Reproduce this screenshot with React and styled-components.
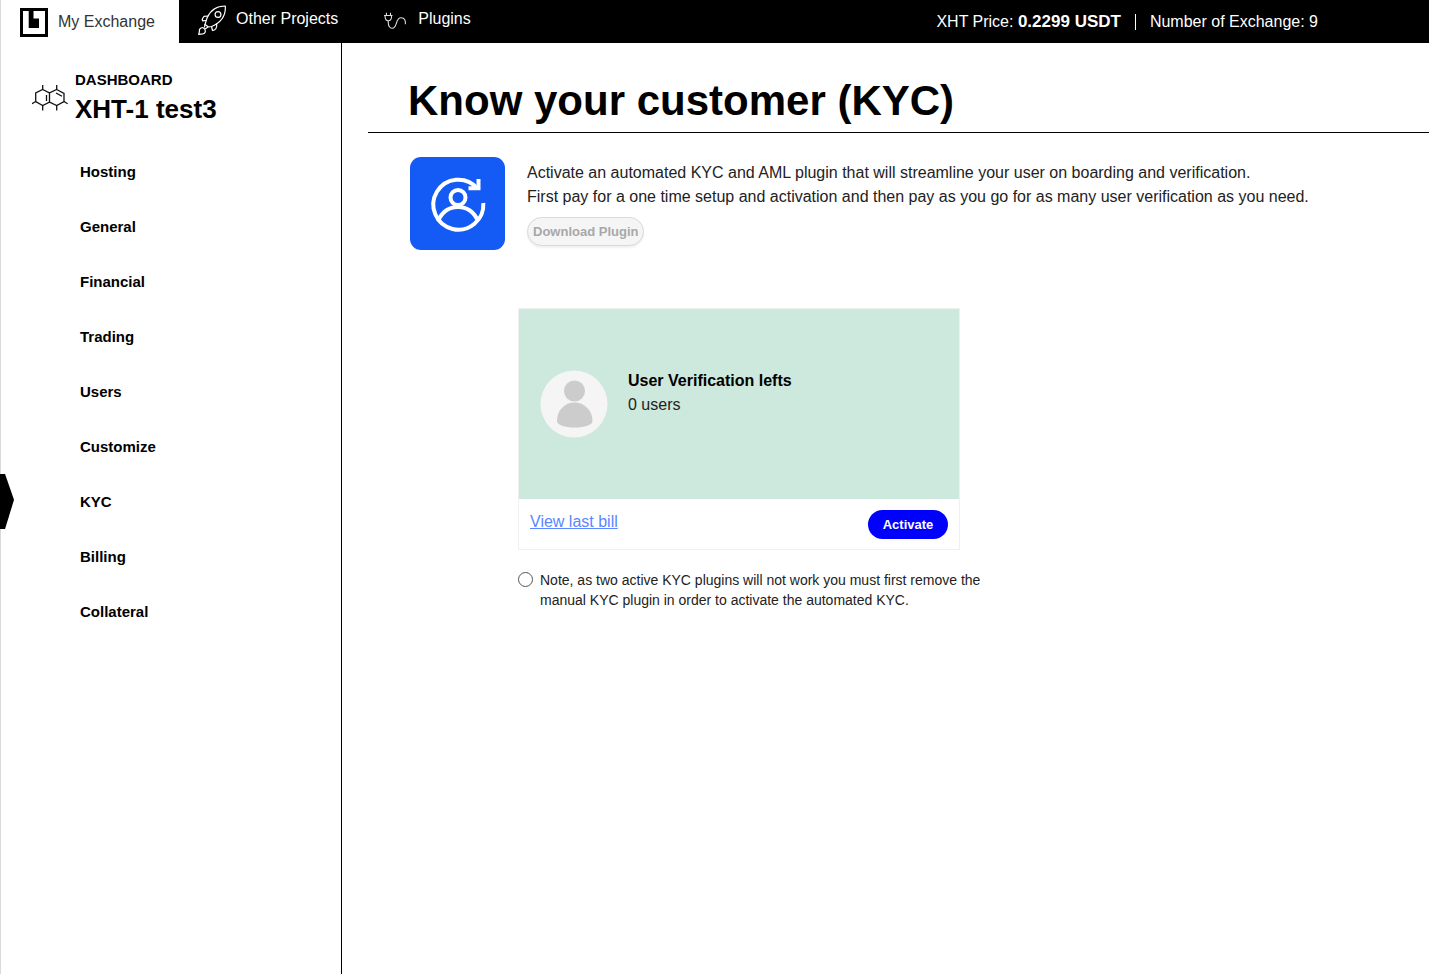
import React from "react";
import styled, { createGlobalStyle } from "styled-components";

const menu = [
  "Hosting",
  "General",
  "Financial",
  "Trading",
  "Users",
  "Customize",
  "KYC",
  "Billing",
  "Collateral",
];

function LogoIcon() {
  return (
    <svg width="28" height="31" viewBox="0 -2 28 31" aria-hidden="true">
      <path d="M1.5 1.5h25v26h-25z" fill="none" stroke="#000" strokeWidth="3" />
      <path d="M8.700 2h4.800v8.500h5.500V20H8.700z" fill="#000" />
    </svg>
  );
}

function RocketIcon() {
  return (
    <svg width="28" height="30" viewBox="0 0 28 30" fill="none" stroke="#fff" strokeWidth="1.2" strokeLinejoin="round" aria-hidden="true">
      <path d="M27.300 1C18 1 12 6 9 13l-2 6.500 3.500 2.500 3-.5C22 18 28 11 27.300 1z" />
      <circle cx="20" cy="9.500" r="2.900" />
      <path d="M10 11l-4 .3c-1 1-2 3-1.500 4.500L8 15.500M18.500 18.500c.5 2 .3 4-.5 5-1 1.500-2 2-3.500 2l-1-4M7 19l-.5 3.500M10 22l-3 2" />
      <path d="M4.700 22.500C2 23 1 24.500 1.500 26L.7 29.400l4-.5c2-.4 3-2 2.500-3.500-.3-1.500-1-2.400-2.500-2.900z" />
    </svg>
  );
}

function PlugIcon() {
  return (
    <svg width="22" height="18" viewBox="0 0 22 18" fill="none" stroke="#ddd" strokeWidth="1.1" aria-hidden="true">
      <path d="M0 4.500h8.500M2.400 1.800v2.700M6.500 1.800v2.700M1 4.500c0 3 .5 5.300 3.300 5.300S7.600 7.500 7.600 4.500" />
      <path d="M4.300 10c-.3 4 1 7.300 4 7.300 5.500 0 2.700-10.500 8.700-10.500 4 0 4.700 3 4.300 6.500" />
    </svg>
  );
}

function MoleculeIcon() {
  return (
    <svg width="36" height="26" viewBox="0 0 36 26" fill="none" stroke="#111" strokeWidth="1.3" aria-hidden="true">
      <path d="M10.700 4.500L17.500 8v9l-6.800 3.500-7-4V8zM24.700 4.500L32 8.500v8l-7.300 4L17.500 17V8z" />
      <path d="M10.700 4.500V0M24.700 4.500V0M10.700 20.500v5M24.700 20.500v5M3.700 16.500L0 18.800M32 16.500l3.700 2.300M14.500 10v6M24 8l6 3.300" />
    </svg>
  );
}

function KycIcon() {
  return (
    <svg width="95" height="93" viewBox="0 0 95 93" aria-hidden="true">
      <rect width="95" height="93" rx="11" fill="#145af5" />
      <g fill="none" stroke="#fff" strokeWidth="4">
        <path d="M67 31A25 25 0 1 0 73.300 46" />
        <path d="M68.500 22v9.300H58.500" />
        <circle cx="48" cy="40.500" r="7.500" />
        <path d="M28 64c4-9 11-14 20-14s16 5 20 14" />
      </g>
    </svg>
  );
}

function AvatarIcon() {
  return (
    <svg width="68" height="68" viewBox="0 0 68 68" aria-hidden="true">
      <circle cx="34" cy="34" r="33.500" fill="#f5f5f5" />
      <circle cx="34.500" cy="21" r="10.500" fill="#ccc" />
      <path d="M17 51c0-11 8-18.500 17.500-18.500S52.500 40 52.500 51c0 4-8 6.500-18 6.500S17 55 17 51z" fill="#ccc" />
    </svg>
  );
}

export default function App() {
  return (
    <Page>
      <GlobalStyle />
      <TopBar>
        <ExchangeTab href="#exchange">
          <LogoIcon />
          My Exchange
        </ExchangeTab>
        <TopLink href="#projects">
          <RocketIcon />
          <span>Other Projects</span>
        </TopLink>
        <TopLink href="#plugins">
          <PlugIcon />
          <span>Plugins</span>
        </TopLink>
        <Stats>
          <span>
            XHT Price: <Price>0.2299 USDT</Price>
          </span>
          <Divider />
          <span>Number of Exchange: 9</span>
        </Stats>
      </TopBar>

      <Body>
        <Sidebar>
          <Project>
            <MoleculeIcon />
            <div>
              <ProjectLabel>DASHBOARD</ProjectLabel>
              <ProjectName>XHT-1 test3</ProjectName>
            </div>
          </Project>
          <Menu>
            {menu.map((name) => (
              <li key={name}>
                <MenuLink href={"#" + name.toLowerCase()} $active={name === "KYC"}>
                  {name}
                </MenuLink>
              </li>
            ))}
          </Menu>
        </Sidebar>

        <Main>
          <Title>Know your customer (KYC)</Title>
          <Intro>
            <KycIcon />
            <IntroText>
              <Text>
                Activate an automated KYC and AML plugin that will streamline your user on boarding and verification.
              </Text>
              <Text>
                First pay for a one time setup and activation and then pay as you go for as many user verification as you need.
              </Text>
              <DownloadButton type="button" disabled>
                Download Plugin
              </DownloadButton>
            </IntroText>
          </Intro>

          <Plan>
            <Card>
              <CardTop>
                <AvatarIcon />
                <div>
                  <CardTitle>User Verification lefts</CardTitle>
                  <Text>0 users</Text>
                </div>
              </CardTop>
              <CardBottom>
                <BillLink href="#bill">View last bill</BillLink>
                <ActivateButton type="button">Activate</ActivateButton>
              </CardBottom>
            </Card>
            <Note>
              <Radio type="radio" name="note" />
              <span>
                Note, as two active KYC plugins will not work you must first remove the manual KYC plugin in order to
                activate the automated KYC.
              </span>
            </Note>
          </Plan>
        </Main>
      </Body>
    </Page>
  );
}

//Styled components

const GlobalStyle = createGlobalStyle`
  * {
    box-sizing: border-box;
  }
  body {
    margin: 0;
    background: #fff;
    color: #000;
    font-family: "Liberation Sans", Arial, sans-serif;
    font-size: 16px;
  }
  svg {
    flex: none;
  }
`;

const Page = styled.div`
  min-height: 100vh;
  display: flex;
  flex-direction: column;
`;

const TopBar = styled.header`
  display: flex;
  height: 43px;
  background: #000;
  color: #fff;
`;

const ExchangeTab = styled.a`
  display: flex;
  align-items: center;
  gap: 10px;
  width: 179px;
  padding-left: 19px;
  border-left: 1px solid #d9d9d9;
  background: #fff;
  color: #333;
  text-decoration: none;
`;

const TopLink = styled.a`
  display: flex;
  align-items: center;
  gap: 10px;
  height: 40px;
  margin-left: 19px;
  color: #fff;
  text-decoration: none;

  & + & {
    gap: 12px;
    margin-left: 46px;
  }
  span {
    padding-bottom: 2px;
  }
`;

const Stats = styled.div`
  display: flex;
  align-items: center;
  gap: 14px;
  margin-left: auto;
  padding-right: 111px;
`;

const Price = styled.b`
  font-size: 17px;
  line-height: 18px;
`;

const Divider = styled.i`
  width: 1px;
  height: 16px;
  background: #fff;
`;

const Body = styled.div`
  flex: 1;
  display: flex;
`;

const Sidebar = styled.aside`
  width: 342px;
  flex: none;
  padding-top: 26px;
  border-left: 1px solid #d9d9d9;
  border-right: 1px solid #000;
`;

const Project = styled.div`
  display: flex;
  align-items: center;
  gap: 7px;
  padding-left: 31px;
`;

const ProjectLabel = styled.div`
  font-size: 15px;
  line-height: 22px;
  font-weight: bold;
`;

const ProjectName = styled.div`
  font-size: 26px;
  line-height: 36px;
  font-weight: bold;
`;

const Menu = styled.ul`
  margin: 17px 0 0;
  padding: 0;
  list-style: none;
`;

const MenuLink = styled.a`
  position: relative;
  display: flex;
  align-items: center;
  height: 55px;
  padding-left: 79px;
  color: #000;
  font-size: 15px;
  font-weight: bold;
  text-decoration: none;

  &::before {
    content: "";
    display: ${(props) => (props.$active ? "block" : "none")};
    position: absolute;
    top: 0;
    left: -1px;
    width: 14px;
    height: 55px;
    background: #000;
    clip-path: polygon(0 0, 36% 0, 100% 47%, 36% 100%, 0 100%);
  }
`;

const Main = styled.main`
  flex: 1;
  min-width: 0;
  padding-left: 26px;
`;

const Title = styled.h1`
  margin: 0;
  padding: 26px 0 0 40px;
  min-height: 90px;
  border-bottom: 1px solid #000;
  font-size: 42px;
  line-height: 63px;
`;

const Intro = styled.section`
  display: flex;
  gap: 22px;
  padding: 24px 20px 0 42px;
`;

const IntroText = styled.div`
  padding-top: 4px;
`;

const Text = styled.p`
  margin: 0;
  color: #222;
  font-size: 16px;
  line-height: 24px;
`;

const DownloadButton = styled.button`
  height: 29px;
  margin-top: 8px;
  padding: 0 5px;
  border: 1px solid #d9d9d9;
  border-radius: 15px;
  background: #f5f5f5;
  box-shadow: 0 2px 2px rgba(0, 0, 0, 0.06);
  color: #a8a8a8;
  font: bold 13px "Liberation Sans", Arial, sans-serif;
`;

const Plan = styled.section`
  max-width: 475px;
  margin: 58px 0 0 150px;
`;

const Card = styled.div`
  max-width: 442px;
  border: 1px solid #f0f0f0;
`;

const CardTop = styled.div`
  display: flex;
  align-items: center;
  gap: 20px;
  height: 190px;
  padding-left: 21px;
  background: #cde8dc;

  div {
    padding-bottom: 22px;
  }
`;

const CardTitle = styled.h2`
  margin: 0;
  font-size: 16px;
  line-height: 24px;
`;

const CardBottom = styled.div`
  display: flex;
  align-items: center;
  justify-content: space-between;
  height: 50px;
  padding: 0 11px;
`;

const BillLink = styled.a`
  color: #5b86ff;
  font-size: 16px;
  padding-bottom: 4px;
`;

const ActivateButton = styled.button`
  width: 80px;
  height: 29px;
  padding: 0;
  border: 0;
  border-radius: 15px;
  background: #0000ff;
  color: #fff;
  font: bold 13px "Liberation Sans", Arial, sans-serif;
`;

const Note = styled.label`
  display: flex;
  gap: 7px;
  margin-top: 20px;
  color: #222;
  font-size: 14px;
  line-height: 20px;
`;

const Radio = styled.input`
  appearance: none;
  flex: none;
  width: 15px;
  height: 15px;
  margin: 2px 0 0;
  border: 1px solid #555;
  border-radius: 50%;
  background: #fff;

  &:checked {
    box-shadow: inset 0 0 0 3px #fff;
    background: #0000ff;
  }
`;
